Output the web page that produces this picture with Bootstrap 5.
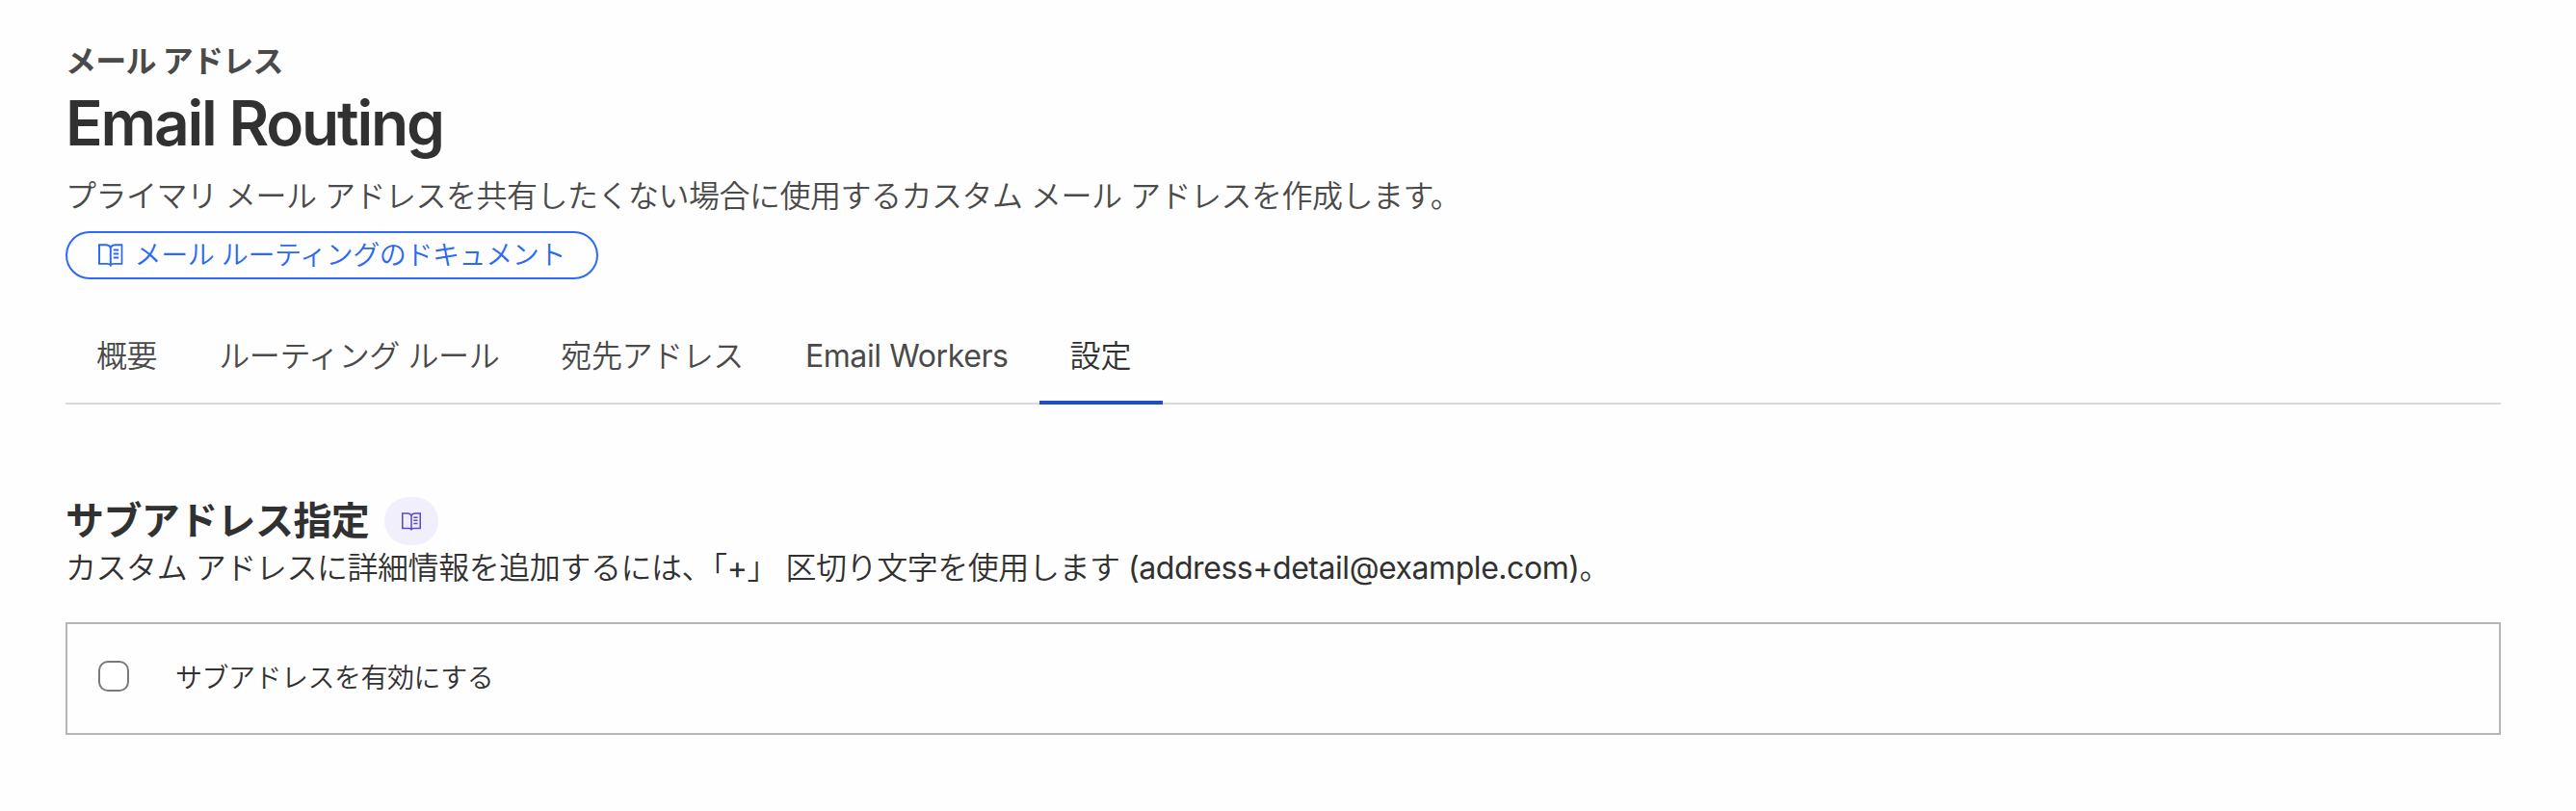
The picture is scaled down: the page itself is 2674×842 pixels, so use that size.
<!DOCTYPE html>
<html lang="ja">
<head>
<meta charset="utf-8">
<meta name="viewport" content="width=device-width, initial-scale=1">
<title>Email Routing</title>
<link href="https://cdn.jsdelivr.net/npm/bootstrap@5.3.0/dist/css/bootstrap.min.css" rel="stylesheet">
<style>
body{font-family:Inter,"Noto Sans CJK JP",sans-serif;font-size:32px;font-weight:350;color:#313131;background:#fefefe}
.page{padding:40px 78px 0 68px;white-space:nowrap}
.page p,.page h1,.page h2,.page h4{margin:0}
.latin{font-weight:400}
.eyebrow{font-size:32px;font-weight:600;line-height:48px;color:#4a4a4a;letter-spacing:-.8px}
.title{font-size:64px;font-weight:600;line-height:80px;letter-spacing:-2.2px}
.page .intro{line-height:48px;color:#4a4a4a;letter-spacing:-.5px;margin:12px 0}
.doc-btn{--bs-btn-color:#2b69f6;--bs-btn-border-color:#2b69f6;--bs-btn-border-width:2px;--bs-btn-padding-x:32px;--bs-btn-padding-y:0;--bs-btn-font-size:28px;--bs-btn-font-weight:350;height:50px;width:553px;gap:12px;letter-spacing:-.4px}
.tabs{--bs-nav-tabs-border-width:0;height:98px;margin-top:32px;border-bottom:2px solid #d9d9d9}
.tabs .nav-link{height:98px;padding:0 32px;margin:0;border:0;border-radius:0;color:#4a4a4a;line-height:96px;letter-spacing:-.4px}
.tabs .nav-link.active{color:#313131;background:none;border-bottom:4px solid #1d4fbf;letter-spacing:0}
.section-title{font-size:40px;font-weight:600;line-height:50px;letter-spacing:-.6px}
.doc-badge{width:56px;height:50px;border-radius:25px;background:#f1effb;color:#5746d8}
.detail{line-height:48px;letter-spacing:-.45px}
.panel{height:117px;margin-top:32px;border:2px solid #b6b6b6;border-radius:0;padding:0 32px 5px;background:#fefefe}
.panel .form-check-input{width:32px;height:32px;margin:0;float:none;border:2px solid #797979;border-radius:10px}
.panel label{font-size:28px;letter-spacing:-.5px;margin-left:48px;padding-top:3px}
</style>
</head>
<body>
<svg class="d-none">
  <symbol id="book" viewBox="0 0 26 24">
    <path d="M13 4C12 1.800 10.500 1 8 1H1v20h8.500c2 0 3 .5 3.500 1.500C13.500 21.500 14.500 21 16.500 21H25V1h-7c-2.500 0-4 .8-5 3zM13 4v19" fill="none" stroke="currentColor" stroke-width="2"/>
    <path d="M16 6.500h5.500M16 10.500h5.500M16 14.500h5.500" fill="none" stroke="currentColor" stroke-width="2"/>
  </symbol>
</svg>
<main class="page">
  <header>
    <h4 class="eyebrow">メール アドレス</h4>
    <h1 class="title">Email Routing</h1>
    <p class="intro">プライマリ メール アドレスを共有したくない場合に使用するカスタム メール アドレスを作成します。</p>
    <a href="#" class="btn doc-btn rounded-pill d-flex align-items-center"><svg width="26" height="24"><use href="#book"/></svg><span>メール ルーティングのドキュメント</span></a>
  </header>
  <ul class="nav nav-tabs tabs">
    <li class="nav-item"><a class="nav-link" href="#">概要</a></li>
    <li class="nav-item"><a class="nav-link" href="#">ルーティング ルール</a></li>
    <li class="nav-item"><a class="nav-link" href="#">宛先アドレス</a></li>
    <li class="nav-item"><a class="nav-link latin" href="#">Email Workers</a></li>
    <li class="nav-item"><a class="nav-link active" href="#">設定</a></li>
  </ul>
  <section class="mt-5 pt-5">
    <div class="d-flex align-items-center gap-3">
      <h2 class="section-title">サブアドレス指定</h2>
      <a href="#" class="doc-badge d-flex align-items-center justify-content-center"><svg width="20" height="19"><use href="#book"/></svg></a>
    </div>
    <p class="detail">カスタム アドレスに詳細情報を追加するには、「<span class="latin">+</span>」 区切り文字を使用します <span class="latin">(address+detail@example.com)</span>。</p>
    <div class="card panel flex-row align-items-center">
      <input class="form-check-input" type="checkbox" id="sub">
      <label for="sub">サブアドレスを有効にする</label>
    </div>
  </section>
</main>
<script src="https://cdn.jsdelivr.net/npm/bootstrap@5.3.0/dist/js/bootstrap.bundle.min.js"></script>
</body>
</html>
